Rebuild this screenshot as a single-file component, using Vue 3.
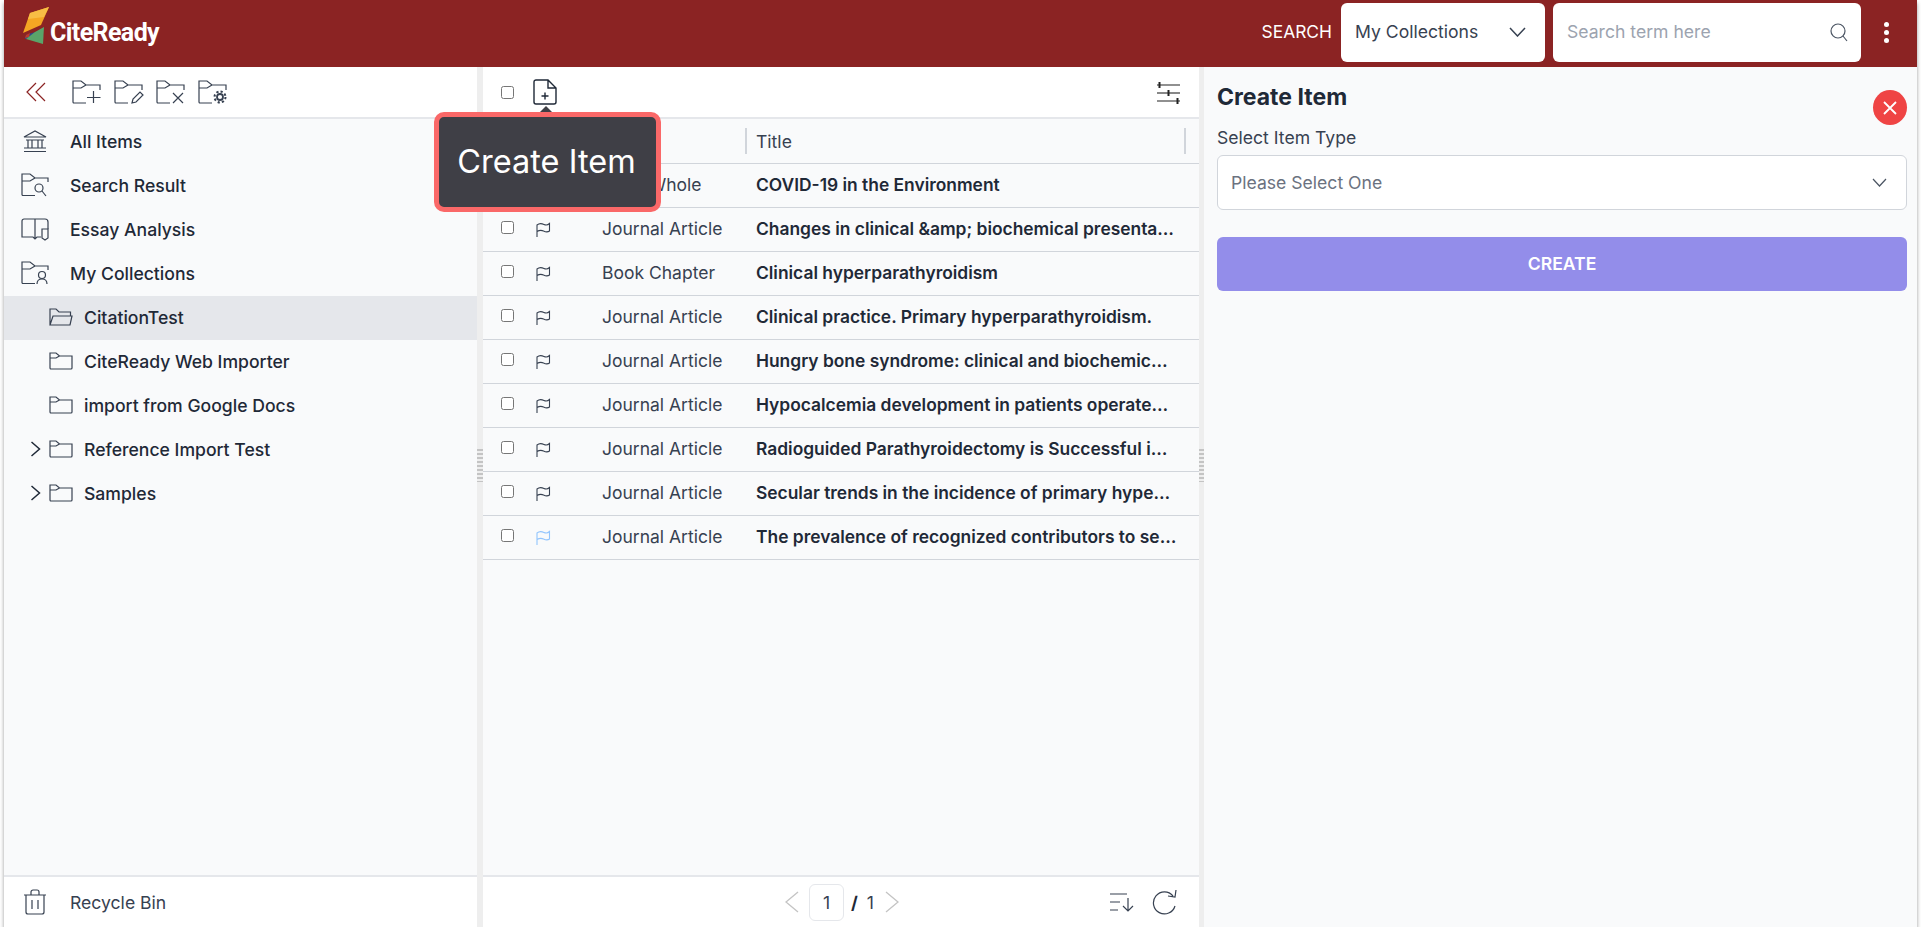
<template>
  <div class="app">
    <header class="topbar">
      <div class="logo">
        <svg class="logo-mark" width="30" height="42" viewBox="0 0 30 42">
          <polygon points="29,1 10,7 3,27 21,19" fill="#f5a623" />
          <polygon points="29,1 10,7 8,13 24,11" fill="#f8bd45" />
          <polygon points="6,29 15,26 13,33 5,33" fill="#2f4a8c" />
          <polygon points="6,29 10,27 9,31 5,32" fill="#c0392b" />
          <polygon points="15,26 24,21 23,38 6,33" fill="#5aa469" />
        </svg>
        <span class="logo-text">CiteReady</span>
      </div>
      <div class="search">
        <span class="search-label">SEARCH</span>
        <div class="scope">
          <span>My Collections</span>
          <svg width="17" height="10" viewBox="0 0 17 10"><path d="M1 1l7.500 8L16 1" class="ln" /></svg>
        </div>
        <div class="term">
          <span>Search term here</span>
          <svg width="20" height="20" viewBox="0 0 20 20"><circle cx="9" cy="9" r="7" class="ln-thin" /><path d="M14 14l4 5" class="ln-thin" /></svg>
        </div>
        <div class="kebab"><i></i><i></i><i></i></div>
      </div>
    </header>

    <div class="panes">
      <aside class="tree-pane">
        <div class="toolbar tree-tools">
          <svg class="back" width="20" height="20" viewBox="0 0 20 20"><path d="M10 1L1 10l9 9M19 1l-9 9 9 9" fill="none" stroke="#8b2323" stroke-width="1.200" /></svg>
          <svg v-for="t in folderTools" :key="t" class="tool" width="30" height="24" viewBox="0 0 30 24">
            <path d="M14 23H2a1 1 0 0 1-1-1V1h8l5 4h14v5M1 8h8l5-3" class="ln-dark" />
            <path v-if="t === 'add'" d="M21.500 11v12M15 17.500h13.500" class="ln-dark" />
            <path v-if="t === 'edit'" d="M18 23l1-4 7-7 3 3-7 7z" class="ln-dark" />
            <path v-if="t === 'del'" d="M17 13l10 10M27 13L17 23" class="ln-dark" />
            <template v-if="t === 'gear'">
              <circle cx="22" cy="17" r="3" class="ln-thick" />
              <circle cx="22" cy="17" r="5.500" fill="none" stroke="#374151" stroke-width="2" stroke-dasharray="2.200 2.100" />
            </template>
          </svg>
        </div>
        <div class="tree">
          <div class="tree-row">
            <svg class="root-icon" width="28" height="24" viewBox="0 0 28 24">
              <path d="M3 8l11-6 11 6zM5 11h18M7 11v8M11 11v8M17 11v8M21 11v8M3 19h22M3 22.500h22" class="ln-dark" />
            </svg>
            <span>All Items</span>
          </div>
          <div class="tree-row">
            <svg class="root-icon" width="28" height="24" viewBox="0 0 28 24">
              <path d="M14 22.500H2a1 1 0 0 1-1-1V1h8l5 4h13v4M1 8h8l5-3" class="ln-dark" />
              <circle cx="18" cy="15" r="4" class="ln-dark" /><path d="M21 18l4 5" class="ln-dark" />
            </svg>
            <span>Search Result</span>
          </div>
          <div class="tree-row">
            <svg class="root-icon" width="28" height="24" viewBox="0 0 28 24">
              <path d="M14 2H3a2 2 0 0 0-2 2v16h11l2 2 2-2h4M14 2v20M14 2h10a3 3 0 0 1 3 3v7" class="ln-dark" />
              <path d="M21 12h6v9l-3 2-3-2z" class="ln-dark" />
            </svg>
            <span>Essay Analysis</span>
          </div>
          <div class="tree-row">
            <svg class="root-icon" width="28" height="24" viewBox="0 0 28 24">
              <path d="M14 22.500H2a1 1 0 0 1-1-1V1h8l5 4h13v4M1 8h8l5-3" class="ln-dark" />
              <circle cx="21" cy="14" r="3.500" class="ln-dark" /><path d="M16 23c0-3 2-5 5-5s5 2 5 5" class="ln-dark" />
            </svg>
            <span>My Collections</span>
          </div>
          <div v-for="f in folders" :key="f.name" class="tree-row child" :class="{ active: f.active }">
            <svg v-if="f.more" class="caret" width="11" height="16" viewBox="0 0 11 16"><path d="M1.500 1l8 7-8 7" fill="none" stroke="#1f2937" stroke-width="1.500" /></svg>
            <svg class="folder" width="24" height="18" viewBox="0 0 24 18">
              <path v-if="f.active" d="M1 17V1h6l3 3h11.500v4M1 17l3-9h19l-2 9z" class="ln-dark" />
              <path v-else d="M1 1h6l3.500 3H23v12a1 1 0 0 1-1 1H2a1 1 0 0 1-1-1zM1 6h6l3.500-2" class="ln-dark" />
            </svg>
            <span>{{ f.name }}</span>
          </div>
        </div>
        <div class="bin">
          <svg class="root-icon" width="28" height="26" viewBox="0 0 28 26">
            <path d="M3 6h22M5 6v17a2 2 0 0 0 2 2h14a2 2 0 0 0 2-2V6M10 6V3a2 2 0 0 1 2-2h4a2 2 0 0 1 2 2v3M11 11v9M17 11v9" class="ln-dark" />
          </svg>
          <span>Recycle Bin</span>
        </div>
      </aside>

      <div class="divider"><span class="grip"></span></div>

      <main class="list-pane">
        <div class="toolbar list-tools">
          <input class="check" type="checkbox" />
          <svg class="new-item" width="24" height="26" viewBox="0 0 24 26">
            <path d="M15 1H3a2 2 0 0 0-2 2v20a2 2 0 0 0 2 2h18a2 2 0 0 0 2-2V9zM15 1v8h8" class="ln-new" />
            <path d="M12 13.500v7M8.500 17h7" class="ln-new" />
          </svg>
          <svg class="columns" width="24" height="20" viewBox="0 0 24 20">
            <path d="M1 3h23M1 19h23" fill="none" stroke="#222" stroke-width="1.100" />
            <path d="M1 11h23" fill="none" stroke="#888" stroke-width="2" />
            <path d="M3.500 0v6M12.500 8v6M21.500 16v6" fill="none" stroke="#222" stroke-width="2" />
          </svg>
        </div>
        <div class="list-head">
          <div class="col-spacer"></div>
          <div class="col-title">Title</div>
          <div class="col-end"></div>
        </div>
        <div class="list">
          <div v-for="(r, i) in rows" :key="i" class="list-row">
            <input class="check" type="checkbox" />
            <svg class="flag" :class="{ blue: r.flagged }" width="15" height="15" viewBox="0 0 15 15">
              <path d="M1 15V3c3-2.500 5-1.500 7-.5s4 .5 5.500-1V9c-2 1.500-4 1-6 0s-4-1-6.500.5" fill="none" stroke="currentColor" stroke-width="1.100" />
            </svg>
            <span class="type">{{ r.type }}</span>
            <span class="title">{{ r.title }}</span>
          </div>
        </div>
        <div class="pager">
          <svg class="arrow" width="14" height="22" viewBox="0 0 14 22"><path d="M13 1L1 11l12 10" fill="none" stroke="#c4c4c4" stroke-width="1.300" /></svg>
          <span class="page-box">1</span>
          <span class="slash">/</span>
          <span class="page-total">1</span>
          <svg class="arrow" width="14" height="22" viewBox="0 0 14 22"><path d="M1 1l12 10L1 21" fill="none" stroke="#c4c4c4" stroke-width="1.300" /></svg>
          <div class="pager-tools">
            <svg width="26" height="20" viewBox="0 0 26 20"><path d="M1 2h17M1 10h10M1 18h8M19 6v13M14 14l5 5 5-5" class="ln-dark" /></svg>
            <svg width="27" height="26" viewBox="0 0 27 26"><path d="M22 7A11 11 0 1 0 24 17M25 1l-1 7-7-1" class="ln-dark" /></svg>
          </div>
        </div>
        <div class="tooltip">Create Item</div>
      </main>

      <div class="divider second"><span class="grip"></span></div>

      <section class="detail">
        <div class="detail-head">
          <h2>Create Item</h2>
          <span class="close">
            <svg width="14" height="14" viewBox="0 0 14 14"><path d="M1 1l12 12M13 1L1 13" fill="none" stroke="#fff" stroke-width="1.800" /></svg>
          </span>
        </div>
        <label class="field-label">Select Item Type</label>
        <div class="select">
          <span>Please Select One</span>
          <svg width="15" height="9" viewBox="0 0 15 9"><path d="M1 1l6.500 7L14 1" class="ln-thin" /></svg>
        </div>
        <button class="create" type="button">CREATE</button>
      </section>
    </div>
  </div>
</template>

<script setup>
const folderTools = ["add", "edit", "del", "gear"];

const folders = [
  { name: "CitationTest", active: true },
  { name: "CiteReady Web Importer" },
  { name: "import from Google Docs" },
  { name: "Reference Import Test", more: true },
  { name: "Samples", more: true },
];

const rows = [
  { type: "Book Whole", title: "COVID-19 in the Environment" },
  { type: "Journal Article", title: "Changes in clinical &amp; biochemical presentation of primary hyperparathyroidism" },
  { type: "Book Chapter", title: "Clinical hyperparathyroidism" },
  { type: "Journal Article", title: "Clinical practice. Primary hyperparathyroidism." },
  { type: "Journal Article", title: "Hungry bone syndrome: clinical and biochemical predictors of its occurrence" },
  { type: "Journal Article", title: "Hypocalcemia development in patients operated for primary hyperparathyroidism" },
  { type: "Journal Article", title: "Radioguided Parathyroidectomy is Successful in all patients with primary disease" },
  { type: "Journal Article", title: "Secular trends in the incidence of primary hyperparathyroidism over five decades" },
  { type: "Journal Article", title: "The prevalence of recognized contributors to secondary osteoporosis", flagged: true },
];
</script>

<style>
html,
body {
  background: #fff;
  overflow: hidden;
}
</style>

<style scoped>
.app {
  width: 1913px;
  height: 927px;
  margin-left: 4px;
  display: flex;
  flex-direction: column;
  font-family: Inter, "Liberation Sans", sans-serif;
  font-size: 17.6px;
  color: #1f2937;
  box-shadow: 0 3px 4px rgba(0, 0, 0, 0.4);
}

.ln,
.ln-thin,
.ln-dark,
.ln-thick,
.ln-new {
  fill: none;
  stroke: #374151;
}
.ln {
  stroke-width: 1.5;
}
.ln-thin {
  stroke: #4b5563;
  stroke-width: 1.2;
}
.ln-dark {
  stroke-width: 1.2;
}
.ln-thick {
  stroke-width: 1.8;
}
.ln-new {
  stroke: #1f2937;
  stroke-width: 1.4;
}

.topbar {
  height: 67px;
  flex: none;
  background: #8b2323;
  display: flex;
  align-items: center;
  justify-content: space-between;
}
.logo {
  display: flex;
  align-items: center;
  margin-left: 16px;
}
.logo-mark {
  margin-top: -14px;
}
.logo-text {
  font-family: Roboto, sans-serif;
  font-weight: 700;
  font-size: 25px;
  letter-spacing: -0.6px;
  color: #fff;
  margin-bottom: 2px;
}
.search {
  display: flex;
  align-items: center;
}
.search-label {
  color: #fff;
  margin-right: 9px;
  font-size: 17.4px;
  margin-top: -4px;
}
.scope,
.term {
  height: 59px;
  margin-top: -2px;
  padding-bottom: 2px;
  background: #fff;
  border-radius: 6px;
  display: flex;
  align-items: center;
  justify-content: space-between;
  box-sizing: border-box;
}
.scope {
  width: 204px;
  margin-right: 8px;
  padding-left: 14px;
  padding-right: 19px;
  color: #374151;
}
.term {
  width: 308px;
  color: #9ca3af;
  padding-left: 14px;
  padding-right: 12px;
}
.kebab {
  width: 50px;
  margin-right: 6px;
  margin-top: -2px;
  display: flex;
  flex-direction: column;
  align-items: center;
  gap: 3px;
}
.kebab i {
  width: 5px;
  height: 5px;
  border-radius: 50%;
  background: #fff;
}

.panes {
  flex: 1;
  min-height: 0;
  display: flex;
}
.divider {
  width: 6px;
  flex: none;
  background: #eeeeee;
  position: relative;
}
.divider.second {
  width: 5px;
}
.grip {
  position: absolute;
  left: 0;
  top: 381px;
  width: 100%;
  height: 34px;
  background-image: radial-gradient(circle, #c4c4c4 1.2px, transparent 1.4px);
  background-size: 3px 4px;
}

.toolbar {
  height: 52px;
  flex: none;
  box-sizing: border-box;
  background: #fff;
  border-bottom: 2px solid #e5e7eb;
  display: flex;
  align-items: center;
}

.tree-pane {
  width: 473px;
  flex: none;
  display: flex;
  flex-direction: column;
  background: #f9fafb;
}
.tree-tools {
  padding-left: 22px;
}
.back {
  margin-right: 26px;
}
.tool {
  margin-right: 12px;
}
.tree {
  flex: 1;
  padding-top: 1px;
}
.tree-row {
  height: 44px;
  box-sizing: border-box;
  padding-bottom: 2px;
  display: flex;
  align-items: center;
  font-weight: 500;
  padding-left: 17px;
}
.root-icon {
  flex: none;
  margin-right: 21px;
}
.tree-row.child {
  padding-left: 45px;
  position: relative;
}
.tree-row.active {
  background: #e5e7eb;
}
.caret {
  position: absolute;
  left: 26px;
}
.folder {
  flex: none;
  margin-right: 11px;
}
.bin {
  height: 52px;
  flex: none;
  box-sizing: border-box;
  background: #fff;
  border-top: 2px solid #e5e7eb;
  display: flex;
  align-items: center;
  padding-left: 17px;
  color: #374151;
}

.list-pane {
  flex: 1;
  min-width: 0;
  display: flex;
  flex-direction: column;
  background: #f9fafb;
  position: relative;
}
.check {
  width: 13px;
  height: 13px;
  margin: 0;
  flex: none;
}
.list-tools {
  padding-left: 18px;
  padding-right: 19px;
}
.new-item {
  margin-left: 19px;
}
.columns {
  margin-left: auto;
  overflow: visible;
}
.list-head {
  height: 45px;
  box-sizing: border-box;
  border-bottom: 1px solid #d1d5db;
  display: flex;
  align-items: center;
  flex: none;
}
.col-spacer {
  width: 262px;
  height: 26px;
  border-right: 2px solid #d1d5db;
}
.col-title {
  flex: 1;
  padding-left: 9px;
  color: #374151;
}
.col-end {
  width: 2px;
  height: 26px;
  background: #d1d5db;
  margin-right: 13px;
}
.list {
  flex: 1;
  font-size: 17.5px;
}
.list-row {
  height: 44px;
  box-sizing: border-box;
  padding-bottom: 2px;
  border-bottom: 1px solid #d1d5db;
  display: flex;
  align-items: center;
  padding-left: 18px;
}
.list-row .check {
  margin-top: -2px;
}
.flag {
  margin-left: 22px;
  margin-right: 51px;
  margin-top: 1px;
  flex: none;
  color: #374151;
}
.flag.blue {
  color: #93c5fd;
}
.type {
  width: 154px;
  flex: none;
  color: #374151;
  white-space: nowrap;
}
.title {
  width: 421px;
  font-size: 17.4px;
  font-weight: 600;
  color: #1f2937;
  overflow: hidden;
  white-space: nowrap;
  text-overflow: ellipsis;
}
.pager {
  height: 52px;
  flex: none;
  box-sizing: border-box;
  background: #fff;
  border-top: 2px solid #e5e7eb;
  display: flex;
  align-items: center;
  padding-left: 302px;
}
.page-box {
  width: 35px;
  height: 37px;
  box-sizing: border-box;
  margin: 0 7px 0 10px;
  border: 1px solid #e5e7eb;
  border-radius: 6px;
  display: flex;
  align-items: center;
  justify-content: center;
  color: #374151;
}
.slash {
  font-weight: 700;
  margin-right: 9px;
}
.page-total {
  margin-right: 11px;
  color: #374151;
}
.pager-tools {
  margin-left: auto;
  margin-right: 21px;
  display: flex;
  align-items: center;
  gap: 16px;
}
.tooltip {
  position: absolute;
  left: -49px;
  top: 45px;
  width: 227px;
  height: 100px;
  box-sizing: border-box;
  padding: 0 2px 2px 0;
  display: flex;
  align-items: center;
  justify-content: center;
  background: #3f3f46;
  border: 5px solid #fa6868;
  border-radius: 10px;
  color: #fff;
  font-size: 32.5px;
}
.tooltip::before {
  content: "";
  position: absolute;
  left: 101px;
  top: -11px;
  border-left: 6px solid transparent;
  border-right: 6px solid transparent;
  border-bottom: 6px solid #3f3f46;
}

.detail {
  width: 713px;
  flex: none;
  box-sizing: border-box;
  background: #f9fafb;
  padding: 13px 10px 0 13px;
  display: flex;
  flex-direction: column;
}
.detail-head {
  display: flex;
  justify-content: space-between;
  height: 44px;
}
.detail-head h2 {
  margin: 3px 0 0;
  font-size: 23px;
  font-weight: 700;
  color: #1f2937;
}
.close {
  width: 34px;
  height: 35px;
  margin-top: 10px;
  border-radius: 50%;
  background: #ef4444;
  display: flex;
  align-items: center;
  justify-content: center;
}
.field-label {
  margin-top: 3px;
  color: #374151;
}
.select {
  height: 55px;
  margin-top: 7px;
  box-sizing: border-box;
  background: #fff;
  border: 1px solid #d1d5db;
  border-radius: 6px;
  display: flex;
  align-items: center;
  justify-content: space-between;
  padding: 0 19px 0 13px;
  color: #6b7280;
}
.create {
  height: 54px;
  margin-top: 27px;
  padding-bottom: 3px;
  border: 0;
  border-radius: 6px;
  background: #938dea;
  color: #fff;
  opacity: 1;
  font: 600 17.6px Inter, sans-serif;
}
</style>
